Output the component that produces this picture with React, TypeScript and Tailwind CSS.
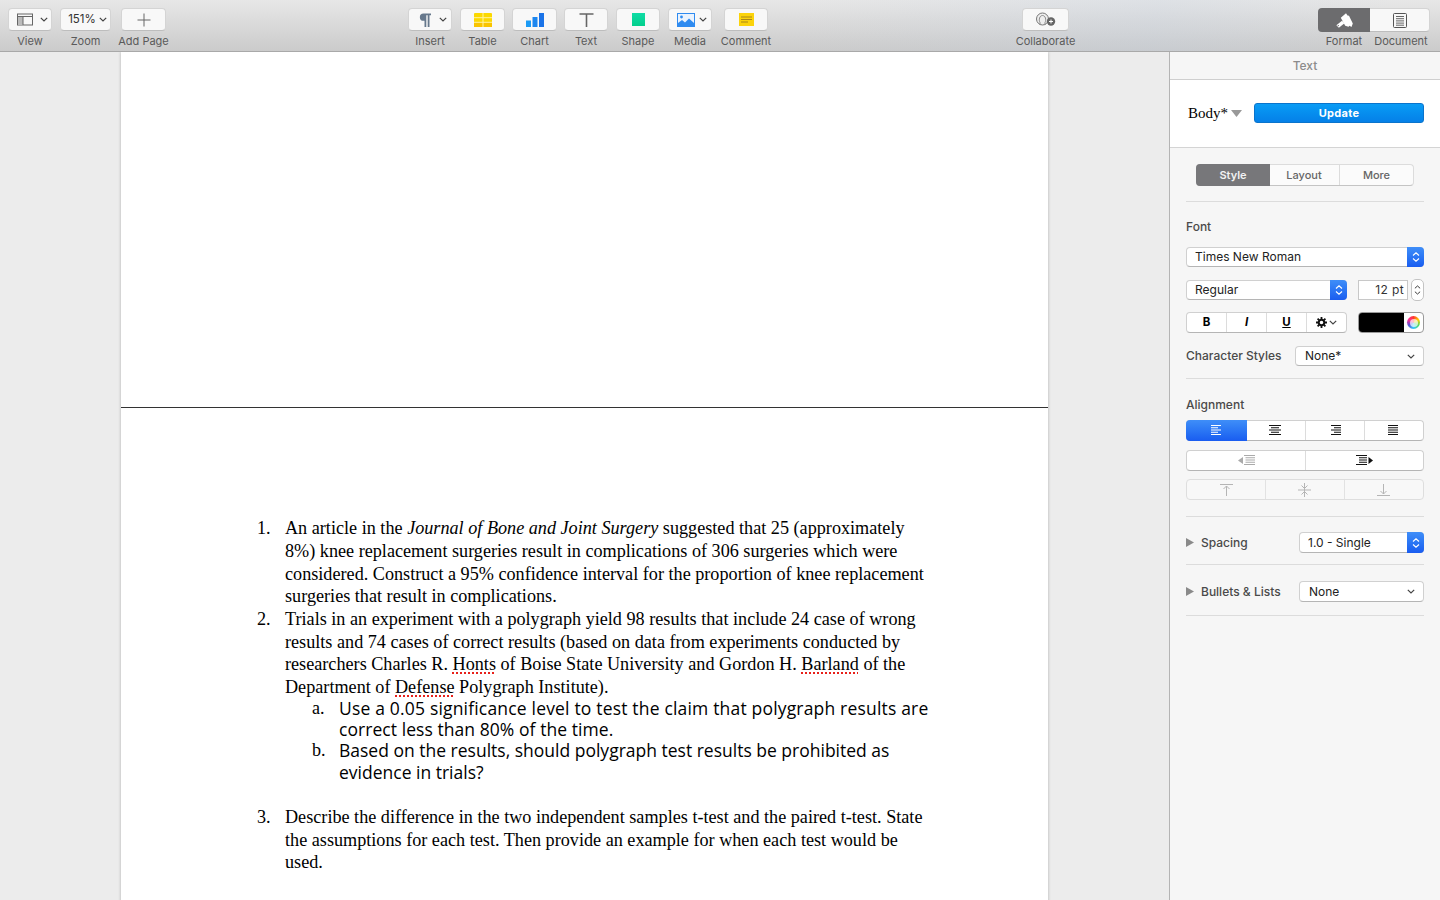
import type { ReactNode } from "react"

const btn =
  "h-[23px] rounded-[4px] bg-[#f8f8f8] border border-[#d4d4d4] border-b-[#bdbdbd] flex items-center justify-center"

function Chevron({ className = "" }: { className?: string }) {
  return (
    <svg width="8" height="5" viewBox="0 0 8 5" className={className}>
      <path d="M0.8 0.8 L4 4 L7.2 0.8" fill="none" stroke="#444" strokeWidth="1.2" />
    </svg>
  )
}

function Tool({ label, w, ml, children }: { label: string; w: number; ml: string; children: ReactNode }) {
  return (
    <div className={`shrink-0 flex flex-col items-center ${ml}`} style={{ width: w }}>
      <div className={`${btn} w-full shrink-0`}>{children}</div>
      <span className="mt-[3px] text-[11px] leading-[14px] text-[#5a5a5a] whitespace-nowrap">{label}</span>
    </div>
  )
}

function Toolbar() {
  return (
    <div className="h-[52px] shrink-0 flex pt-[8px] pl-[8px] border-b border-[#a9a9a9] bg-[linear-gradient(100deg,rgba(0,0,0,0)_55%,rgba(190,205,225,0.22)_80%,rgba(0,0,0,0)_96%),linear-gradient(180deg,#e7e7e7,#cbcbcb)]">
      <Tool label="View" w={44} ml="">
        <svg width="17" height="13" viewBox="0 0 17 13" className="ml-[5px] mr-[6px]">
          <rect x="0.5" y="1" width="15" height="11" fill="none" stroke="#666" />
          <rect x="1" y="4" width="5" height="8" fill="#bbb" />
          <path d="M0.5 3.5H15.5M6 3.5V12" stroke="#666" />
        </svg>
        <Chevron />
      </Tool>
      <Tool label="Zoom" w={51} ml="ml-[8px]">
        <span className="ml-[4px] text-[11.5px] text-[#333] mr-[3px]">151%</span>
        <Chevron />
      </Tool>
      <Tool label="Add Page" w={45} ml="ml-[10px]">
        <svg width="14" height="14" viewBox="0 0 14 14">
          <path d="M7 0.5V13.5M0.5 7H13.5" stroke="#666" strokeWidth="1" />
        </svg>
      </Tool>
      <Tool label="Insert" w={44} ml="ml-[242px]">
        <svg width="12" height="14" viewBox="0 0 12 14" className="ml-[5px] mr-[8px]">
          <path d="M4.500 0.500H12V2.300H10.500V14H8.700V2.300H7.300V14H5.500V7.800H4.500A3.650 3.650 0 0 1 4.500 0.500Z" fill="#66788c" />
        </svg>
        <Chevron />
      </Tool>
      <Tool label="Table" w={45} ml="ml-[8px]">
        <svg width="18" height="14" viewBox="0 0 18 14">
          <rect width="18" height="14" rx="1" fill="#fbd800" />
          <rect y="9" width="18" height="5" fill="#f9c400" />
          <path d="M0 4.7H18M0 9.3H18M9 0V14" stroke="#fff3a0" strokeWidth="1" />
        </svg>
      </Tool>
      <Tool label="Chart" w={45} ml="ml-[7px]">
        <svg width="18" height="14" viewBox="0 0 18 14">
          <rect x="0" y="7.5" width="5" height="6.5" fill="#1c9bf5" />
          <rect x="6.5" y="4" width="5" height="10" fill="#1c86ef" />
          <rect x="13" y="0" width="5" height="14" fill="#1a73e8" />
        </svg>
      </Tool>
      <Tool label="Text" w={44} ml="ml-[7px]">
        <svg width="15" height="14" viewBox="0 0 15 14">
          <path d="M0.5 1H14.5M7.5 1V14" stroke="#666" strokeWidth="1.6" fill="none" />
        </svg>
      </Tool>
      <Tool label="Shape" w={44} ml="ml-[8px]">
        <div className="w-[13px] h-[13px] bg-linear-to-b from-[#0fdca6] to-[#03cf8c]" />
      </Tool>
      <Tool label="Media" w={44} ml="ml-[8px]">
        <svg width="18" height="14" viewBox="0 0 18 14" className="ml-[3px] mr-[4px]">
          <rect x="0.5" y="0.5" width="17" height="13" fill="#eaf3fe" stroke="#2f8bf0" />
          <circle cx="4.5" cy="4" r="1.4" fill="#2f8bf0" />
          <path d="M1 13V10L5 7L8 9.5L12 5.5L17 10V13Z" fill="#2f8bf0" />
        </svg>
        <Chevron />
      </Tool>
      <Tool label="Comment" w={44} ml="ml-[12px]">
        <svg width="15" height="13" viewBox="0 0 15 13">
          <rect width="15" height="13" fill="#fbd30b" />
          <path d="M2 4H13M2 6.5H13M2 9H9" stroke="#a9861a" strokeWidth="1" />
        </svg>
      </Tool>
      <Tool label="Collaborate" w={47} ml="ml-[254px]">
        <svg width="22" height="15" viewBox="0 0 22 15">
          <circle cx="7.5" cy="7" r="6" fill="#eee" stroke="#777" />
          <path d="M5 13V10.5C3.5 8 4.5 3.5 7.5 3.5S11.5 8 10 10.5V13" fill="none" stroke="#888" />
          <circle cx="16" cy="9.5" r="4.2" fill="#666" />
          <path d="M14 9.5H18M16 7.5V11.500" stroke="#fff" strokeWidth="1" />
        </svg>
      </Tool>
      <div className="flex ml-[249px]">
        <div className="flex flex-col items-center w-[52px]">
          <div className="h-[24px] w-[52px] shrink-0 rounded-l-[4px] bg-[#6c6c6e] flex items-center justify-center">
            <svg width="17" height="15" viewBox="0 0 17 15" className="ml-[1px]">
              <path d="M4.800 4.800L10 0.200L11.500 2.500L13 2.700L16.800 10.500L15.500 14L13.500 12.800L12.500 13.800L9.200 12.800Z" fill="#fff" />
              <path d="M0.400 12.300L6 7.700L8.500 10.300L2.900 14.800Z" fill="#fff" />
              <circle cx="2.300" cy="12.600" r="0.700" fill="#6c6c6e" />
            </svg>
          </div>
          <span className="mt-[2px] text-[11px] leading-[14px] text-[#5a5a5a]">Format</span>
        </div>
        <div className="flex flex-col items-center w-[60px]">
          <div className="h-[24px] w-[60px] shrink-0 rounded-r-[4px] bg-[#f8f8f8] border border-l-0 border-[#d4d4d4] border-b-[#bdbdbd] flex items-center justify-center">
            <svg width="14" height="15" viewBox="0 0 14 15">
              <rect x="0.5" y="0.5" width="13" height="14" rx="1" fill="none" stroke="#555" />
              <path d="M3 3.500H11M3 5.700H11M3 7.900H11M3 10.100H11M3 12.200H11" stroke="#666" />
            </svg>
          </div>
          <span className="mt-[2px] ml-[2px] text-[11px] leading-[14px] text-[#5a5a5a]">Document</span>
        </div>
      </div>
    </div>
  )
}

function Misspelled({ children }: { children: ReactNode }) {
  return (
    <span className="underline decoration-dotted decoration-[#e8201a] decoration-2 underline-offset-[2px]">
      {children}
    </span>
  )
}

function Item({ n, children }: { n: string; children: ReactNode }) {
  return (
    <div className="flex">
      <span className="w-[28px] shrink-0 -ml-[28px]">{n}</span>
      <div>{children}</div>
    </div>
  )
}

function SubItem({ n, children }: { n: string; children: ReactNode }) {
  return (
    <div className="flex">
      <span className="w-[27px] shrink-0 text-[18.1px] leading-[21.3px]">{n}</span>
      <div className="w-[592px] text-[17.5px] leading-[21.3px] font-medium font-['Open_Sans',sans-serif]">{children}</div>
    </div>
  )
}

function Canvas() {
  return (
    <div className="flex-1 min-w-0 bg-[#ececec] pl-[121px] overflow-hidden">
      <div className="w-[927px] bg-white shadow-[0_0_3px_rgba(0,0,0,0.25)]">
        <div className="h-[356px] border-b border-[#333]" />
        <div className="pt-[109.2px] pl-[164px] h-[600px] font-['Liberation_Serif',serif] text-[18.18px] leading-[22.7px] text-black">
          <div className="w-[645px]">
            <Item n="1.">
              An article in the <i>Journal of Bone and Joint Surgery</i> suggested that 25 (approximately 8%) knee
              replacement surgeries result in complications of 306 surgeries which were considered. Construct a 95%
              confidence interval for the proportion of knee replacement surgeries that result in complications.
            </Item>
            <Item n="2.">
              Trials in an experiment with a polygraph yield 98 results that include 24 case of wrong results and 74
              cases of correct results (based on data from experiments conducted by researchers Charles R.{" "}
              <Misspelled>Honts</Misspelled> of Boise State University and Gordon H. <Misspelled>Barland</Misspelled> of
              the Department of <Misspelled>Defense</Misspelled> Polygraph Institute).
            </Item>
            <div className="ml-[27px] -mt-[1px]">
              <SubItem n="a.">
                <span className="tracking-[0.18px]">Use a 0.05 significance level to test the claim that polygraph results are</span>{" "}
                <span className="tracking-[0.06px]">correct less than 80% of the time.</span>
              </SubItem>
              <SubItem n="b.">Based on the results, should polygraph test results be prohibited as evidence in trials?</SubItem>
            </div>
            <div className="mt-[23px]">
              <Item n="3.">
                Describe the difference in the two independent samples t-test and the paired t-test. State the
                assumptions for each test. Then provide an example for when each test would be used.
              </Item>
            </div>
          </div>
        </div>
      </div>
    </div>
  )
}

function Stepper() {
  return (
    <div className="w-[17px] self-stretch -my-px -mr-px rounded-r-[4px] bg-linear-to-b from-[#3f8ef8] to-[#1a5cf0] flex flex-col items-center justify-center gap-[2px]">
      <svg width="8" height="4" viewBox="0 0 8 4"><path d="M1 3.500L4 0.800L7 3.500" fill="none" stroke="#fff" strokeWidth="1.100" /></svg>
      <svg width="8" height="4" viewBox="0 0 8 4"><path d="M1 0.500L4 3.200L7 0.500" fill="none" stroke="#fff" strokeWidth="1.100" /></svg>
    </div>
  )
}

const control =
  "bg-white rounded-[4px] border border-[#d0d0d0] border-b-[#b5b5b5] flex items-center text-[12px] text-[#222]"

function Disclosure({ label, value, stepper, mt, pl }: { label: string; value: string; stepper?: boolean; mt: string; pl: string }) {
  return (
    <div className={`flex items-center ${mt}`}>
      <svg width="8" height="9" viewBox="0 0 8 9" className="mr-[7px]"><path d="M0 0L8 4.500L0 9Z" fill="#8a8a8a" /></svg>
      <span className="w-[98px] text-[12px] font-medium text-[#4a4a4a] whitespace-nowrap">{label}</span>
      <div className={`${control} w-[125px] h-[21px] ${pl}`}>
        <span className="flex-1">{value}</span>
        {stepper ? <Stepper /> : <Chevron className="mr-[8px]" />}
      </div>
    </div>
  )
}

function Lines({ widths, align, color }: { widths: number[]; align: "left" | "center" | "right"; color: string }) {
  return (
    <svg width="14" height="11" viewBox="0 0 14 11">
      {widths.map((w, i) => {
        const x = align === "left" ? 1 : align === "right" ? 13 - w : 6 - w / 2
        return <rect key={i} x={x} y={i * 2.25} width={w} height="1" fill={color} />
      })}
    </svg>
  )
}

function Inspector() {
  return (
    <div className="w-[271px] shrink-0 border-l border-[#b4b4b4] bg-[#f6f6f6] flex flex-col">
      <div className="h-[28px] shrink-0 border-b border-[#cfcfcf] flex items-center justify-center text-[12px] font-medium text-[#8c8c8c]">
        Text
      </div>
      <div className="h-[68px] shrink-0 bg-white border-b border-[#d4d4d4] flex items-center pl-[18px] pr-[16px] pb-[1px]">
        <span className="font-['Liberation_Serif',serif] text-[15px] text-black">Body*</span>
        <svg width="11" height="7" viewBox="0 0 11 7" className="ml-[3px] mt-px"><path d="M0 0H11L5.500 7Z" fill="#999" /></svg>
        <div className="ml-auto w-[170px] h-[20px] rounded-[3px] bg-linear-to-b from-[#0a9cf5] to-[#0580e8] border border-[#0a74cc] flex items-center justify-center text-[11px] font-bold tracking-[0.3px] text-white">
          Update
        </div>
      </div>
      <div className="px-[16px]">
        <div className="mt-[16px] mx-[10px] h-[22px] flex rounded-[4px] border border-[#dcdcdc] border-b-[#c4c4c4] bg-[#fbfbfb] text-[11px] font-medium text-[#666]">
          <div className="w-[74px] -m-px rounded-l-[4px] bg-[#77777a] text-[#f2f2f2] flex items-center justify-center font-semibold">Style</div>
          <div className="w-[71px] border-r border-[#dcdcdc] flex items-center justify-center">Layout</div>
          <div className="flex-1 flex items-center justify-center">More</div>
        </div>
        <div className="mt-[15px] border-t border-[#dcdcdc]" />
        <div className="mt-[17px] text-[12px] leading-[15px] font-medium text-[#4a4a4a]">Font</div>
        <div className={`${control} mt-[13px] h-[20px] pl-[8px]`}>
          <span className="flex-1">Times New Roman</span>
          <Stepper />
        </div>
        <div className="mt-[13px] flex h-[20px]">
          <div className={`${control} w-[161px] pl-[8px]`}>
            <span className="flex-1">Regular</span>
            <Stepper />
          </div>
          <div className="ml-[11px] w-[50px] border border-[#c8c8c8] bg-white flex items-center justify-end pr-[3px] text-[12px] tracking-[0.4px] text-[#333]">12 pt</div>
          <div className="ml-[3px] w-[13px] -my-px rounded-[5px] border border-[#c4c4c4] bg-white flex flex-col items-center justify-center gap-[2px]">
            <svg width="7" height="4" viewBox="0 0 8 4"><path d="M1 3.500L4 0.800L7 3.500" fill="none" stroke="#333" strokeWidth="1.100" /></svg>
            <svg width="7" height="4" viewBox="0 0 8 4"><path d="M1 0.500L4 3.200L7 0.500" fill="none" stroke="#333" strokeWidth="1.100" /></svg>
          </div>
        </div>
        <div className="mt-[12px] flex h-[21px]">
          <div className={`${control} w-[161px] text-black`}>
            <div className="w-[40px] h-full border-r border-[#dcdcdc] flex items-center justify-center font-bold text-[11.5px]">B</div>
            <div className="w-[40px] h-full border-r border-[#dcdcdc] flex items-center justify-center font-bold italic text-[11.5px]">I</div>
            <div className="w-[40px] h-full border-r border-[#dcdcdc] flex items-center justify-center font-bold underline text-[11.5px]">U</div>
            <div className="flex-1 flex items-center justify-center gap-[2px]">
              <svg width="11" height="11" viewBox="0 0 11 11">
                <circle cx="5.500" cy="5.500" r="2.800" fill="none" stroke="#111" strokeWidth="2" />
                <path d="M5.500 0V11M0 5.500H11M1.600 1.600L9.400 9.400M9.400 1.600L1.600 9.400" stroke="#111" strokeWidth="1.800" strokeDasharray="2 7 2" />
              </svg>
              <Chevron />
            </div>
          </div>
          <div className="ml-[11px] w-[66px] flex rounded-[4px] border border-[#9a9a9a] overflow-hidden bg-white">
            <div className="w-[45px] bg-black" />
            <div className="flex-1 flex items-center justify-center">
              <div className="w-[13px] h-[13px] rounded-full bg-[conic-gradient(#ff3b30,#ffcc00,#4cd964,#34c8fa,#5856d6,#ff2d92,#ff3b30)] p-[2.500px]">
                <div className="w-full h-full rounded-full bg-white/70" />
              </div>
            </div>
          </div>
        </div>
        <div className="mt-[13px] flex items-center justify-between">
          <span className="text-[12px] font-medium text-[#4a4a4a]">Character Styles</span>
          <div className={`${control} w-[129px] h-[20px] pl-[9px]`}>
            <span className="flex-1">None*</span>
            <Chevron className="mr-[8px]" />
          </div>
        </div>
        <div className="mt-[12px] border-t border-[#dcdcdc]" />
        <div className="mt-[18px] text-[12px] leading-[15px] font-medium text-[#4a4a4a]">Alignment</div>
        <div className={`${control} mt-[8px] h-[21px]`}>
          <div className="w-[61px] h-[21px] -ml-px rounded-l-[4px] bg-linear-to-b from-[#3f8ef8] to-[#1a5cf0] flex items-center justify-center">
            <Lines widths={[10, 7, 10, 7, 10]} align="left" color="#fff" />
          </div>
          <div className="w-[59px] h-full border-r border-[#dcdcdc] flex items-center justify-center">
            <Lines widths={[12, 8, 12, 8, 12]} align="center" color="#111" />
          </div>
          <div className="w-[59px] h-full border-r border-[#dcdcdc] flex items-center justify-center">
            <Lines widths={[10, 7, 10, 7, 10]} align="right" color="#111" />
          </div>
          <div className="flex-1 flex items-center justify-center">
            <Lines widths={[10, 10, 10, 10, 10]} align="center" color="#111" />
          </div>
        </div>
        <div className={`${control} mt-[9px] h-[21px]`}>
          <div className="w-[119px] h-full border-r border-[#dcdcdc] flex items-center justify-center">
            <svg width="17" height="11" viewBox="0 0 17 11">
              <path d="M0 5.500L5 2V9Z" fill="#aaa" />
              <path d="M6 .5H17M7.500 2.750H17M7.500 5H17M7.500 7.250H17M6 9.500H17" stroke="#aaa" />
            </svg>
          </div>
          <div className="flex-1 flex items-center justify-center">
            <svg width="17" height="11" viewBox="0 0 17 11">
              <path d="M17 5.500L12.500 2V9Z" fill="#111" />
              <path d="M0 .5H11M3 2.750H11M3 5H11M3 7.250H11M0 9.500H11" stroke="#111" />
            </svg>
          </div>
        </div>
        <div className="mt-[8px] h-[21px] flex rounded-[4px] border border-[#dedede] bg-[#f8f8f8]">
          <div className="w-[79px] border-r border-[#e2e2e2] flex items-center justify-center">
            <svg width="13" height="12" viewBox="0 0 13 12"><path d="M0 .5H13M6.500 2V12M3.500 5L6.500 2L9.500 5" fill="none" stroke="#b5b5b5" /></svg>
          </div>
          <div className="w-[79px] border-r border-[#e2e2e2] flex items-center justify-center">
            <svg width="13" height="14" viewBox="0 0 13 14" className="mr-px"><path d="M0 7H13M6.500 0V14M3.500 2.500L6.500 5.500L9.500 2.500M3.500 11.500L6.500 8.500L9.500 11.500" fill="none" stroke="#b5b5b5" /></svg>
          </div>
          <div className="flex-1 flex items-center justify-center">
            <svg width="13" height="12" viewBox="0 0 13 12" className="mr-px"><path d="M0 11.500H13M6.500 0V10M3.500 7L6.500 10L9.500 7" fill="none" stroke="#b5b5b5" /></svg>
          </div>
        </div>
        <div className="mt-[16px] border-t border-[#dcdcdc]" />
        <Disclosure label="Spacing" value="1.0 - Single" stepper mt="mt-[15px]" pl="pl-[8px]" />
        <div className="mt-[11px] border-t border-[#dcdcdc]" />
        <Disclosure label="Bullets & Lists" value="None" mt="mt-[16px]" pl="pl-[9px]" />
        <div className="mt-[13px] border-t border-[#dcdcdc]" />
      </div>
    </div>
  )
}

export default function App() {
  return (
    <div className="w-[1440px] h-[900px] overflow-hidden flex flex-col font-['Inter','Liberation_Sans',sans-serif]">
      <Toolbar />
      <div className="flex-1 min-h-0 flex">
        <Canvas />
        <Inspector />
      </div>
    </div>
  )
}
